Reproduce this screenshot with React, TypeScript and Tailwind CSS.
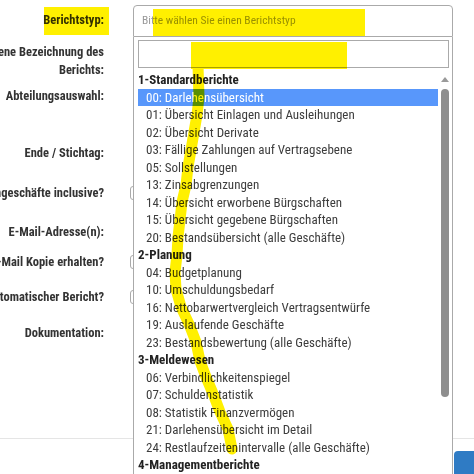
import React from "react";

type Item = { t: string; g?: boolean; hl?: boolean };

const items: Item[] = [
  { t: "1-Standardberichte", g: true },
  { t: "00: Darlehensübersicht", hl: true },
  { t: "01: Übersicht Einlagen und Ausleihungen" },
  { t: "02: Übersicht Derivate" },
  { t: "03: Fällige Zahlungen auf Vertragsebene" },
  { t: "05: Sollstellungen" },
  { t: "13: Zinsabgrenzungen" },
  { t: "14: Übersicht erworbene Bürgschaften" },
  { t: "15: Übersicht gegebene Bürgschaften" },
  { t: "20: Bestandsübersicht (alle Geschäfte)" },
  { t: "2-Planung", g: true },
  { t: "04: Budgetplanung" },
  { t: "10: Umschuldungsbedarf" },
  { t: "16: Nettobarwertvergleich Vertragsentwürfe" },
  { t: "19: Auslaufende Geschäfte" },
  { t: "23: Bestandsbewertung (alle Geschäfte)" },
  { t: "3-Meldewesen", g: true },
  { t: "06: Verbindlichkeitenspiegel" },
  { t: "07: Schuldenstatistik" },
  { t: "08: Statistik Finanzvermögen" },
  { t: "21: Darlehensübersicht im Detail" },
  { t: "24: Restlaufzeitenintervalle (alle Geschäfte)" },
  { t: "4-Managementberichte", g: true },
  { t: "25: Kennzahlenübersicht" },
];

function Label({ children }: { children: React.ReactNode }) {
  return (
    <div className="w-[104px] shrink-0 flex justify-end whitespace-nowrap font-bold text-[12.5px] leading-[18px] text-[#333]">
      <span>{children}</span>
    </div>
  );
}

function Check() {
  return <div className="ml-[26px] w-[14px] h-[14px] shrink-0 rounded-[3px] border border-[#aaa] bg-white" />;
}

function Dropdown() {
  return (
    <div className="relative ml-[29px] w-[320px] h-[32px] shrink-0">
      <div className="h-[32px] border border-[#aaa] rounded-t-[4px] pl-[8px] flex items-center text-[11.5px] text-[#999] bg-white whitespace-nowrap">
        Bitte wählen Sie einen Berichtstyp
      </div>
      <div className="absolute z-10 left-0 top-full w-[320px] h-[440px] bg-white border-x border-[#aaa] pl-[4px] pr-[3px] pt-[3px]">
        <div className="h-[28px] border border-[#aaa] bg-white" />
        <div className="mt-[3px] flex gap-[3px] text-[13px]">
          <div className="w-[300px] flex flex-col">
            {items.map((it, i) =>
              it.g ? (
                <div key={i} className="h-[17.5px] leading-[17.5px] font-bold text-[#222] whitespace-nowrap">
                  {it.t}
                </div>
              ) : it.hl ? (
                <div key={i} className="h-[17.5px] leading-[17.5px] pl-[8px] bg-[#5897fb] text-white whitespace-nowrap">
                  {it.t}
                </div>
              ) : (
                <div key={i} className="h-[17.5px] leading-[17.5px] pl-[8px] text-[#3d3d3d] whitespace-nowrap">
                  {it.t}
                </div>
              )
            )}
          </div>
          <div className="w-[8px] flex flex-col items-center">
            <svg width="8" height="5" viewBox="0 0 8 5" className="mt-[6px]">
              <polygon points="4,0 8,5 0,5" fill="#9a9a9a" />
            </svg>
            <div className="mt-[7px] w-[8px] h-[308px] rounded-full bg-[#8e8e8e]" />
          </div>
        </div>
      </div>
    </div>
  );
}

function Overlay() {
  const pts =
    "198,66 199,97 197,115 194,132 191,150 188,167 186,185 182,202 180,220 178,237 177,255 175,272 176,289 181,307 189,324 196,342 200,361 206,377 214,396 220,412 228,429 232,449";
  return (
    <svg
      className="absolute left-0 top-0 pointer-events-none mix-blend-multiply z-20"
      width="474"
      height="474"
      viewBox="0 0 474 474"
    >
      <rect x="44" y="7" width="65" height="28" fill="#fff000" />
      <rect x="153" y="9" width="212" height="27" fill="#fff000" />
      <rect x="191" y="42" width="156" height="27" fill="#fff000" />
      <polyline points={pts} fill="none" stroke="#fff000" strokeWidth="11" strokeLinejoin="round" strokeLinecap="round" />
    </svg>
  );
}

export default function App() {
  return (
    <div className="relative w-[474px] h-[474px] overflow-hidden bg-white font-['Roboto_Condensed',Roboto,sans-serif] font-stretch-condensed text-[14px] text-[#333]">
      <div className="h-[438px] flex flex-col">
        <div className="flex items-start pt-[5px]">
          <div className="mt-[6px]">
            <Label>Berichtstyp:</Label>
          </div>
          <Dropdown />
        </div>
        <div className="mt-[6px] flex flex-col">
          <Label>Eigene Bezeichnung des</Label>
          <Label>Berichts:</Label>
        </div>
        <div className="mt-[8px] flex items-center">
          <Label>Abteilungsauswahl:</Label>
        </div>
        <div className="mt-[39px] flex items-center">
          <Label>Ende / Stichtag:</Label>
        </div>
        <div className="mt-[22px] flex items-center">
          <Label>Plangeschäfte inclusive?</Label>
          <Check />
        </div>
        <div className="mt-[21px] flex items-center">
          <Label>E-Mail-Adresse(n):</Label>
        </div>
        <div className="mt-[12px] flex items-center">
          <Label>Eine E-Mail Kopie erhalten?</Label>
          <Check />
        </div>
        <div className="mt-[17px] flex items-center">
          <Label>Automatischer Bericht?</Label>
          <Check />
        </div>
        <div className="mt-[18px] flex items-center">
          <Label>Dokumentation:</Label>
        </div>
      </div>
      <div className="border-t border-[#e5e5e5] pt-[12px] pl-[454px]">
        <button className="h-[34px] rounded-tl-[4px] bg-[#2f7bc4] text-white pl-[28px] pr-3 whitespace-nowrap">
          Speichern
        </button>
      </div>
      <Overlay />
    </div>
  );
}
